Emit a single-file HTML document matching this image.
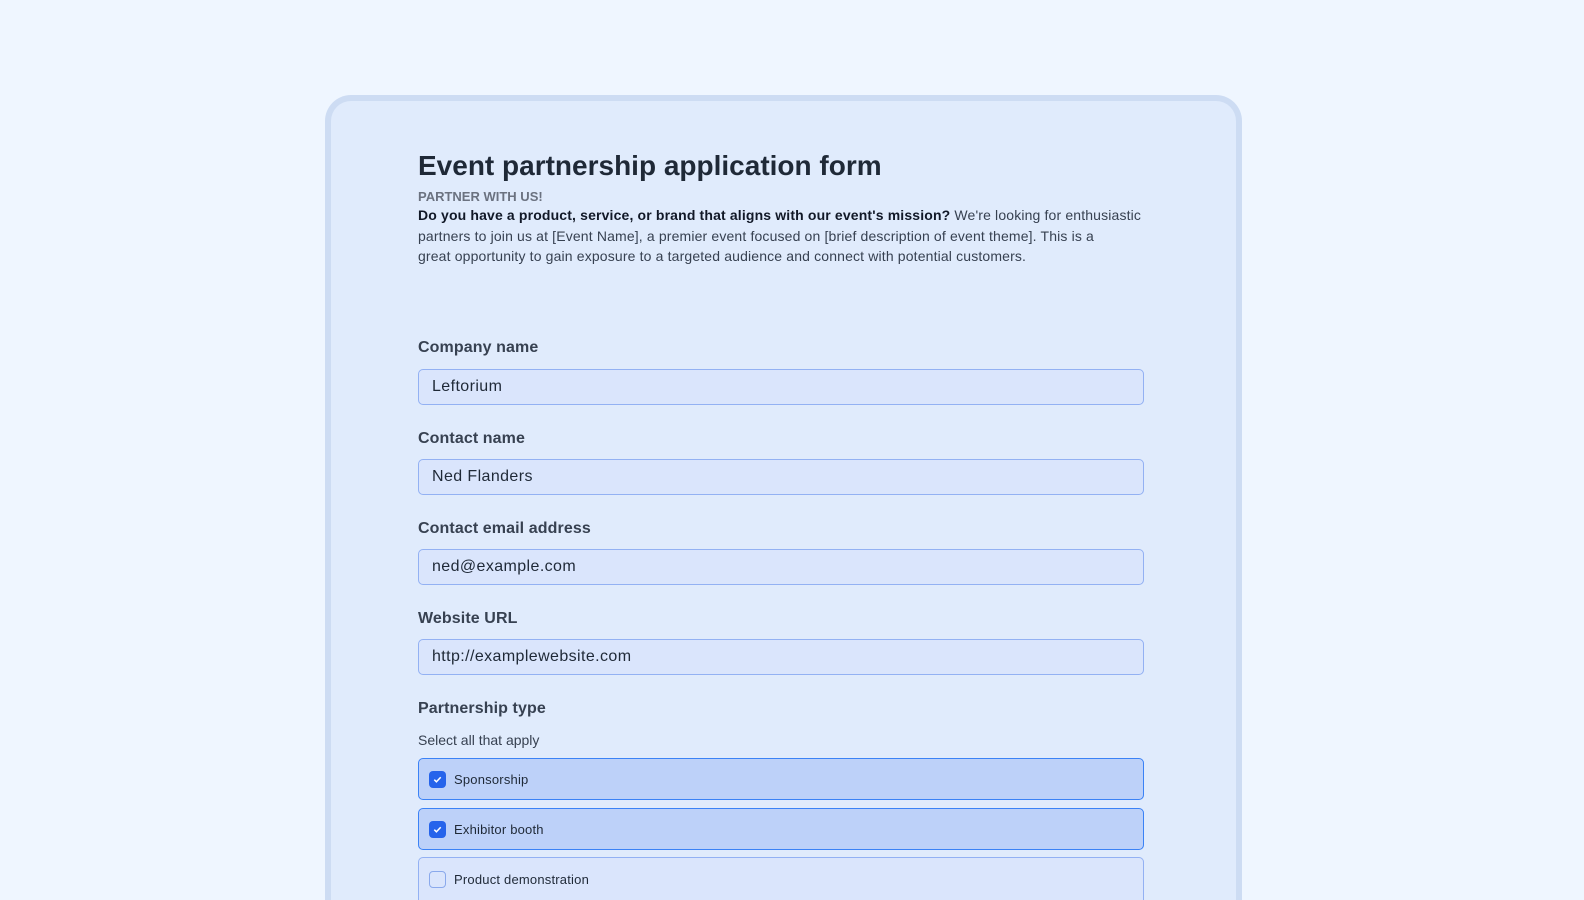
<!DOCTYPE html>
<html><head><style>
*{box-sizing:border-box;margin:0;padding:0}
html,body{width:1584px;height:900px;overflow:hidden;background:#eff6ff;font-family:"Liberation Sans",sans-serif;color:#1f2937}
.wrap{position:relative;width:1584px;height:900px;overflow:hidden}
.card{position:absolute;left:325px;top:95px;width:917px;height:805px;background:#e0ebfc;border:6px solid #cddcf3;border-bottom:0;border-radius:26px 26px 0 0}
.c{position:absolute;left:418px;width:726px}
h1{font-size:28px;font-weight:700;color:#1f2937}
.eb{font-size:13px;font-weight:700;color:#6b7280}
p{font-size:14px;line-height:20.5px;color:#374151;letter-spacing:0.15px;width:760px;white-space:nowrap}
label{display:block;font-size:16px;font-weight:700;color:#374151;letter-spacing:0.1px}
.in{height:36px;border:1px solid #93b1f3;background:#dae5fc;border-radius:5px;font-size:16px;padding:0 13px;line-height:34px;color:#1f2937;letter-spacing:0.4px}
.opt{height:42px;border:1px solid #3b82f6;background:#bdd1f9;border-radius:5px;font-size:13px;display:flex;align-items:center;padding-left:10px;color:#1f2937;letter-spacing:0.2px}
.opt.off{background:#dae5fc;border-color:#93b1f3}
.cb{width:17px;height:17px;border-radius:4px;background:#2563eb;margin-right:8px;display:flex;align-items:center;justify-content:center}
.off .cb{background:#dae5fc;border:1.5px solid #8aa9ec}
</style></head><body><div class="wrap">
<div class="card"></div>
<div class="c" style="top:150px"><h1>Event partnership application form</h1></div>
<div class="c eb" style="top:189px">PARTNER WITH US!</div>
<div class="c" style="top:205px"><p><b style="color:#111827">Do you have a product, service, or brand that aligns with our event's mission?</b> We're looking for enthusiastic<br>partners to join us at [Event Name], a premier event focused on [brief description of event theme]. This is a<br>great opportunity to gain exposure to a targeted audience and connect with potential customers.</p></div>
<div class="c" style="top:339px"><label>Company name</label></div>
<div class="c in" style="top:369px">Leftorium</div>
<div class="c" style="top:430px"><label>Contact name</label></div>
<div class="c in" style="top:459px">Ned Flanders</div>
<div class="c" style="top:520px"><label>Contact email address</label></div>
<div class="c in" style="top:549px">ned@example.com</div>
<div class="c" style="top:610px"><label>Website URL</label></div>
<div class="c in" style="top:639px">http://examplewebsite.com</div>
<div class="c" style="top:700px"><label>Partnership type</label></div>
<div class="c" style="top:732px;font-size:14px;color:#374151">Select all that apply</div>
<div class="c opt" style="top:758px"><span class="cb"><svg width="11" height="11" viewBox="0 0 12 12"><path d="M2.5 6.2l2.3 2.3 4.7-5" fill="none" stroke="#fff" stroke-width="1.6"/></svg></span>Sponsorship</div>
<div class="c opt" style="top:808px"><span class="cb"><svg width="11" height="11" viewBox="0 0 12 12"><path d="M2.5 6.2l2.3 2.3 4.7-5" fill="none" stroke="#fff" stroke-width="1.6"/></svg></span>Exhibitor booth</div>
<div class="c opt off" style="top:857px;height:43px;border-bottom:0;border-radius:5px 5px 0 0"><span class="cb"></span>Product demonstration</div>
</div></body></html>
